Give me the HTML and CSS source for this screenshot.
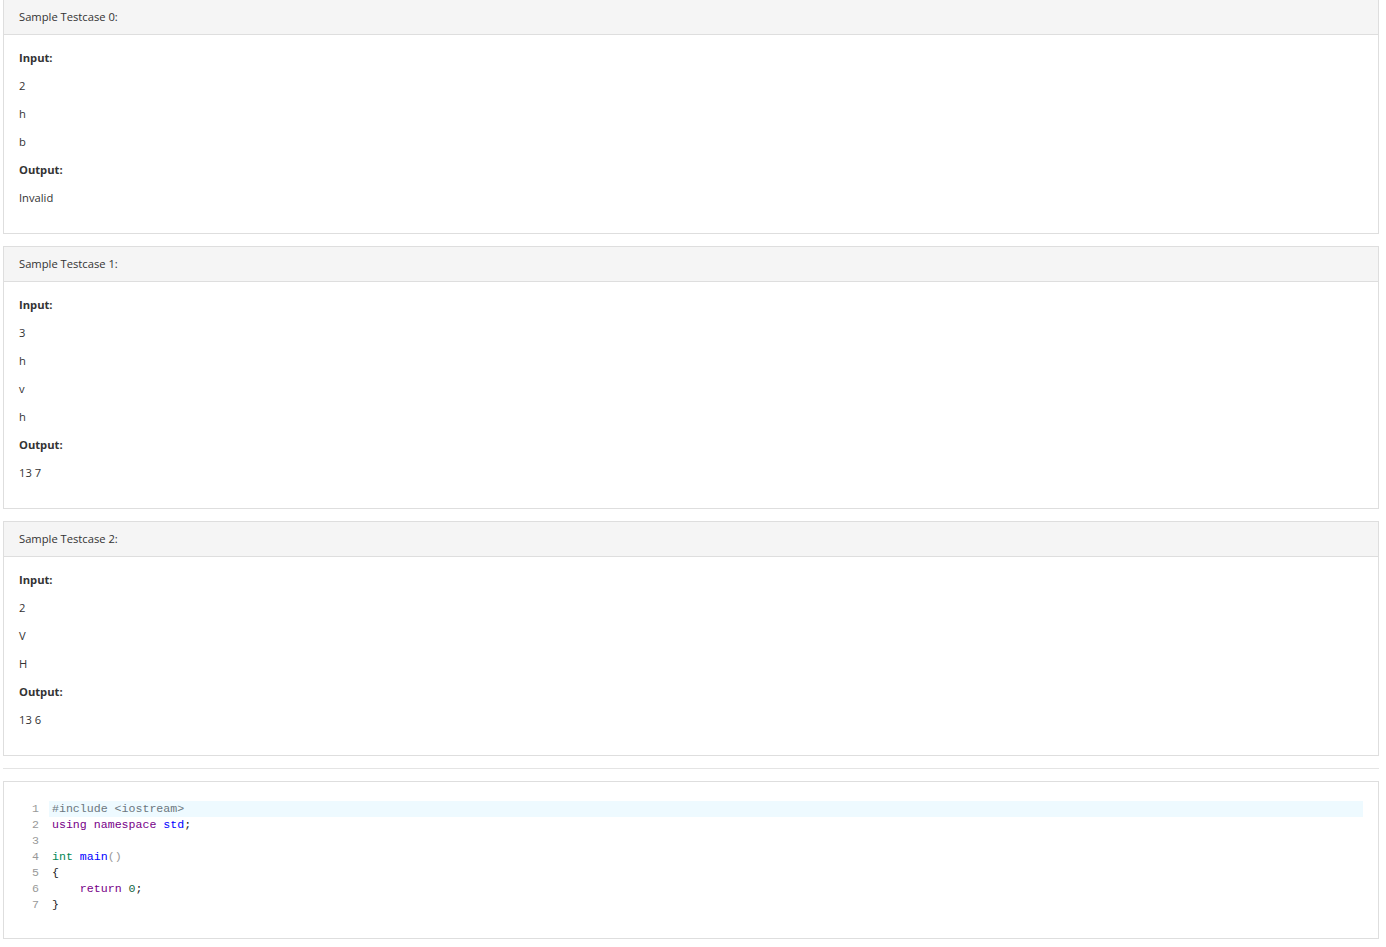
FILE: index.html
```html
<!DOCTYPE html>
<html>
<head>
<meta charset="utf-8">
<link rel="stylesheet" href="styles.css">
</head>
<body>
<div class="page">
  <div class="card first">
    <div class="card-head">Sample Testcase 0:</div>
    <div class="card-body">
      <p class="label">Input:</p>
      <p>2</p>
      <p>h</p>
      <p>b</p>
      <p class="label">Output:</p>
      <p>Invalid</p>
    </div>
  </div>
  <div class="card">
    <div class="card-head">Sample Testcase 1:</div>
    <div class="card-body">
      <p class="label">Input:</p>
      <p>3</p>
      <p>h</p>
      <p>v</p>
      <p>h</p>
      <p class="label">Output:</p>
      <p>13 7</p>
    </div>
  </div>
  <div class="card">
    <div class="card-head">Sample Testcase 2:</div>
    <div class="card-body">
      <p class="label">Input:</p>
      <p>2</p>
      <p>V</p>
      <p>H</p>
      <p class="label">Output:</p>
      <p>13 6</p>
    </div>
  </div>
  <hr class="sep">
  <div class="card code-card">
    <div class="code">
      <div class="line active"><span class="ln">1</span><span class="src"><span class="meta">#include &lt;iostream&gt;</span></span></div>
      <div class="line"><span class="ln">2</span><span class="src"><span class="kw">using</span> <span class="kw">namespace</span> <span class="def">std</span>;</span></div>
      <div class="line"><span class="ln">3</span><span class="src"></span></div>
      <div class="line"><span class="ln">4</span><span class="src"><span class="type">int</span> <span class="def">main</span><span class="br">()</span></span></div>
      <div class="line"><span class="ln">5</span><span class="src">{</span></div>
      <div class="line"><span class="ln">6</span><span class="src">    <span class="kw">return</span> <span class="num">0</span>;</span></div>
      <div class="line"><span class="ln">7</span><span class="src">}</span></div>
    </div>
  </div>
</div>
</body>
</html>
```

FILE: styles.css
```css
html, body {
  margin: 0;
  padding: 0;
  background: #fff;
}
body {
  font-family: "Open Sans", "Noto Sans", sans-serif;
  font-size: 11.2px;
  color: #333;
}
.page {
  padding: 0 7px 0 3px;
}
.card {
  border: 1px solid #dedede;
  background: #fff;
  margin-bottom: 12px;
}
.card.first {
  margin-top: -1px;
}
.card-head {
  background: #f5f5f5;
  border-bottom: 1px solid #dedede;
  height: 34px;
  line-height: 34px;
  padding: 0 15px;
  color: #333;
}
.card-body {
  padding: 15px 15px 15px;
}
.card-body p {
  margin: 0 0 12px;
  line-height: 16px;
}
.card-body .label {
  font-weight: 700;
}
.sep {
  border: 0;
  border-top: 1px solid #e4e4e4;
  margin: 0 0 12px;
  height: 0;
}
.code-card {
  padding: 19px 15px 25px;
}
.code {
  font-family: "Liberation Mono", "DejaVu Sans Mono", monospace;
  font-size: 11.6px;
}
.line {
  display: flex;
  height: 16px;
  line-height: 16px;
  white-space: pre;
}
.ln {
  width: 20px;
  padding-right: 10px;
  text-align: right;
  color: #999;
  flex: none;
}
.src {
  flex: 1;
  padding-left: 3px;
  color: #222;
}
.line.active .src {
  background: #eefaff;
}
.meta { color: #6b7780; }
.kw { color: #770088; }
.def { color: #0000ff; }
.type { color: #008855; }
.num { color: #116644; }
.br { color: #999; }
```
